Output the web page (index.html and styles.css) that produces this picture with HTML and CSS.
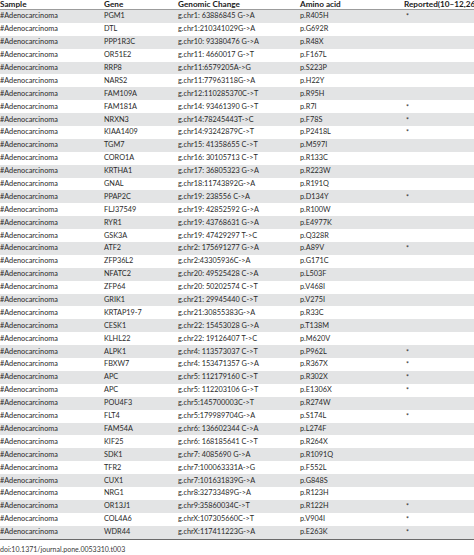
FILE: index.html
```html
<!DOCTYPE html>
<html>
<head>
<meta charset="utf-8">
<link rel="stylesheet" href="styles.css">
</head>
<body>
<div class="table">
  <div class="row head"><span>Sample</span><span>Gene</span><span>Genomic Change</span><span>Amino acid</span><span>Reported(10–12,26)</span></div>
  <div class="row"><span>#Adenocarcinoma</span><span>PGM1</span><span>g.chr1: 63886845 G-&gt;A</span><span>p.R405H</span><span class="ast">*</span></div>
  <div class="row"><span>#Adenocarcinoma</span><span>DTL</span><span>g.chr1:210341029G-&gt;A</span><span>p.G692R</span><span></span></div>
  <div class="row"><span>#Adenocarcinoma</span><span>PPP1R3C</span><span>g.chr10: 93380476 G-&gt;A</span><span>p.R48X</span><span></span></div>
  <div class="row"><span>#Adenocarcinoma</span><span>OR51E2</span><span>g.chr11: 4660017 G-&gt;T</span><span>p.F167L</span><span></span></div>
  <div class="row"><span>#Adenocarcinoma</span><span>RRP8</span><span>g.chr11:6579205A-&gt;G</span><span>p.S223P</span><span></span></div>
  <div class="row"><span>#Adenocarcinoma</span><span>NARS2</span><span>g.chr11:77963118G-&gt;A</span><span>p.H22Y</span><span></span></div>
  <div class="row"><span>#Adenocarcinoma</span><span>FAM109A</span><span>g.chr12:110285370C-&gt;T</span><span>p.R95H</span><span></span></div>
  <div class="row"><span>#Adenocarcinoma</span><span>FAM181A</span><span>g.chr14: 93461390 G-&gt;T</span><span>p.R7I</span><span class="ast">*</span></div>
  <div class="row"><span>#Adenocarcinoma</span><span>NRXN3</span><span>g.chr14:78245443T-&gt;C</span><span>p.F78S</span><span class="ast">*</span></div>
  <div class="row"><span>#Adenocarcinoma</span><span>KIAA1409</span><span>g.chr14:93242879C-&gt;T</span><span>p.P2418L</span><span class="ast">*</span></div>
  <div class="row"><span>#Adenocarcinoma</span><span>TGM7</span><span>g.chr15: 41358655 C-&gt;T</span><span>p.M597I</span><span></span></div>
  <div class="row"><span>#Adenocarcinoma</span><span>CORO1A</span><span>g.chr16: 30105713 C-&gt;T</span><span>p.R133C</span><span></span></div>
  <div class="row"><span>#Adenocarcinoma</span><span>KRTHA1</span><span>g.chr17: 36805323 G-&gt;A</span><span>p.R223W</span><span></span></div>
  <div class="row"><span>#Adenocarcinoma</span><span>GNAL</span><span>g.chr18:11743892G-&gt;A</span><span>p.R191Q</span><span></span></div>
  <div class="row"><span>#Adenocarcinoma</span><span>PPAP2C</span><span>g.chr19: 238556 C-&gt;A</span><span>p.D134Y</span><span class="ast">*</span></div>
  <div class="row"><span>#Adenocarcinoma</span><span>FLJ37549</span><span>g.chr19: 42852592 G-&gt;A</span><span>p.R100W</span><span></span></div>
  <div class="row"><span>#Adenocarcinoma</span><span>RYR1</span><span>g.chr19: 43768631 G-&gt;A</span><span>p.E4977K</span><span></span></div>
  <div class="row"><span>#Adenocarcinoma</span><span>GSK3A</span><span>g.chr19: 47429297 T-&gt;C</span><span>p.Q328R</span><span></span></div>
  <div class="row"><span>#Adenocarcinoma</span><span>ATF2</span><span>g.chr2: 175691277 G-&gt;A</span><span>p.A89V</span><span class="ast">*</span></div>
  <div class="row"><span>#Adenocarcinoma</span><span>ZFP36L2</span><span>g.chr2:43305936C-&gt;A</span><span>p.G171C</span><span></span></div>
  <div class="row"><span>#Adenocarcinoma</span><span>NFATC2</span><span>g.chr20: 49525428 C-&gt;A</span><span>p.L503F</span><span></span></div>
  <div class="row"><span>#Adenocarcinoma</span><span>ZFP64</span><span>g.chr20: 50202574 C-&gt;T</span><span>p.V468I</span><span></span></div>
  <div class="row"><span>#Adenocarcinoma</span><span>GRIK1</span><span>g.chr21: 29945440 C-&gt;T</span><span>p.V275I</span><span></span></div>
  <div class="row"><span>#Adenocarcinoma</span><span>KRTAP19-7</span><span>g.chr21:30855383G-&gt;A</span><span>p.R33C</span><span></span></div>
  <div class="row"><span>#Adenocarcinoma</span><span>CESK1</span><span>g.chr22: 15453028 G-&gt;A</span><span>p.T138M</span><span></span></div>
  <div class="row"><span>#Adenocarcinoma</span><span>KLHL22</span><span>g.chr22: 19126407 T-&gt;C</span><span>p.M620V</span><span></span></div>
  <div class="row"><span>#Adenocarcinoma</span><span>ALPK1</span><span>g.chr4: 113573037 C-&gt;T</span><span>p.P962L</span><span class="ast">*</span></div>
  <div class="row"><span>#Adenocarcinoma</span><span>FBXW7</span><span>g.chr4: 153471357 G-&gt;A</span><span>p.R367X</span><span class="ast">*</span></div>
  <div class="row"><span>#Adenocarcinoma</span><span>APC</span><span>g.chr5: 112179160 C-&gt;T</span><span>p.R302X</span><span class="ast">*</span></div>
  <div class="row"><span>#Adenocarcinoma</span><span>APC</span><span>g.chr5: 112203106 G-&gt;T</span><span>p.E1306X</span><span class="ast">*</span></div>
  <div class="row"><span>#Adenocarcinoma</span><span>POU4F3</span><span>g.chr5:145700003C-&gt;T</span><span>p.R274W</span><span></span></div>
  <div class="row"><span>#Adenocarcinoma</span><span>FLT4</span><span>g.chr5:179989704G-&gt;A</span><span>p.S174L</span><span class="ast">*</span></div>
  <div class="row"><span>#Adenocarcinoma</span><span>FAM54A</span><span>g.chr6: 136602344 C-&gt;A</span><span>p.L274F</span><span></span></div>
  <div class="row"><span>#Adenocarcinoma</span><span>KIF25</span><span>g.chr6: 168185641 C-&gt;T</span><span>p.R264X</span><span></span></div>
  <div class="row"><span>#Adenocarcinoma</span><span>SDK1</span><span>g.chr7: 4085690 G-&gt;A</span><span>p.R1091Q</span><span></span></div>
  <div class="row"><span>#Adenocarcinoma</span><span>TFR2</span><span>g.chr7:100063331A-&gt;G</span><span>p.F552L</span><span></span></div>
  <div class="row"><span>#Adenocarcinoma</span><span>CUX1</span><span>g.chr7:101631839G-&gt;A</span><span>p.G848S</span><span></span></div>
  <div class="row"><span>#Adenocarcinoma</span><span>NRG1</span><span>g.chr8:32733489G-&gt;A</span><span>p.R123H</span><span></span></div>
  <div class="row"><span>#Adenocarcinoma</span><span>OR13J1</span><span>g.chr9:35860034C-&gt;T</span><span>p.R122H</span><span class="ast">*</span></div>
  <div class="row"><span>#Adenocarcinoma</span><span>COL4A6</span><span>g.chrX:107305660C-&gt;T</span><span>p.V904I</span><span class="ast">*</span></div>
  <div class="row"><span>#Adenocarcinoma</span><span>WDR44</span><span>g.chrX:117411223G-&gt;A</span><span>p.E263K</span><span class="ast">*</span></div>
</div>
<p class="doi">doi:10.1371/journal.pone.0053310.t003</p>
</body>
</html>
```

FILE: styles.css
```css
html, body {
  margin: 0;
  padding: 0;
  background: #ffffff;
}
body {
  width: 474px;
  height: 555px;
  overflow: hidden;
  font-family: Lato, "Open Sans", sans-serif;
  color: #2a2a2a;
}
.table {
  width: 474px;
  border-bottom: 1.5px solid #6a6a6a;
}
.row {
  display: grid;
  grid-template-columns: 104px 74px 122px 104px 1fr;
  height: 12.9px;
  align-items: center;
  font-size: 7.3px;
  line-height: 8px;
  white-space: nowrap;
}
.row:nth-child(even) {
  background: #e3e4e5;
}
.head {
  height: 9px;
  border-bottom: 1px solid #9c9c9c;
  font-weight: 700;
  font-size: 8.2px;
  color: #1a1a1a;
  align-items: start;
  line-height: 8.4px;
}
.ast {
  padding-left: 2px;
  font-size: 7px;
}
.doi {
  margin: 5px 0 0 0;
  font-size: 7px;
  line-height: 9px;
  color: #3a3a3a;
}
```
